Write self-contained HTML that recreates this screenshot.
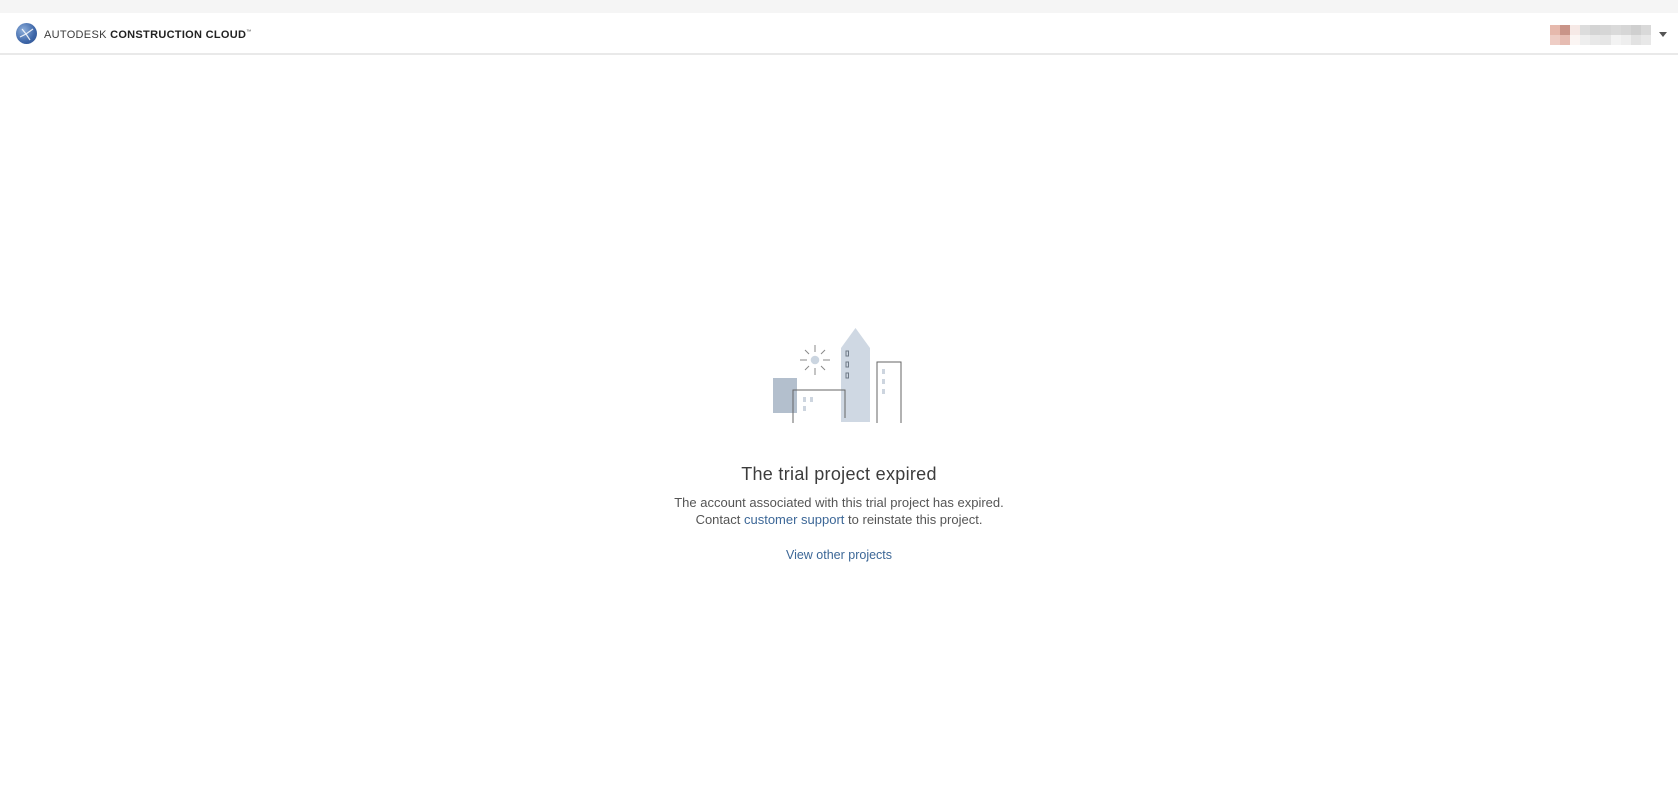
<!DOCTYPE html>
<html><head><meta charset="utf-8"><style>
*{margin:0;padding:0;box-sizing:border-box}
html,body{width:1678px;height:806px;overflow:hidden;background:#fff;font-family:"Liberation Sans",sans-serif}
.top{height:13px;background:#f5f5f5}
.hdr{height:42px;background:#fff;border-bottom:2px solid #e9e9e9;position:relative}
.logo{position:absolute;left:16px;top:10px;width:21px;height:21px;border-radius:50%;background:radial-gradient(circle at 35% 35%,#8fb0dc,#3d66a8 60%,#2c4f8c)}
.brand{position:absolute;left:44px;top:16px;font-size:11px;letter-spacing:0.3px;color:#3c3c3c;white-space:nowrap}
.brand b{color:#222;font-weight:bold}
.brand sup{font-size:5px;vertical-align:top}
.av{position:absolute;left:1550px;top:12px;display:flex;flex-wrap:wrap;width:101px;height:20px}
.av i{display:block;width:10.1px;height:10px}
.caret{position:absolute;left:1659px;top:19px;width:0;height:0;border-left:4px solid transparent;border-right:4px solid transparent;border-top:5px solid #555}
.ill{position:absolute;left:740px;top:310px}
.t{position:absolute;left:0;width:1678px;text-align:center;color:#3c3c3c}
h1{font-weight:normal;font-size:18px;top:464px;letter-spacing:0.3px}
.p{font-size:13px;color:#555;line-height:17px;top:494px}
a{color:#3c6797;text-decoration:none}
.l{font-size:12.5px;top:548px}
</style></head><body>
<div class="top"></div>
<div class="hdr">
<div class="logo"><svg width="21" height="21" viewBox="0 0 21 21"><path d="M4 14 L10 11 L17 6 M10 11 L14 17 M6 6 L10 11" stroke="#fff" stroke-width="1.2" fill="none" opacity=".85"/></svg></div>
<div class="brand">AUTODESK <b>CONSTRUCTION CLOUD</b><sup>™</sup></div>
<div class="av">
<i style="background:#e6b9ad"></i><i style="background:#c99488"></i><i style="background:#f6e9e6"></i><i style="background:#dcdcdc"></i><i style="background:#d4d4d4"></i><i style="background:#d6d6d6"></i><i style="background:#dadada"></i><i style="background:#d6d6d6"></i><i style="background:#cfcfcf"></i><i style="background:#d9d9d9"></i>
<i style="background:#eecdc5"></i><i style="background:#e6bcb2"></i><i style="background:#fbf5f3"></i><i style="background:#eeeeee"></i><i style="background:#e8e8e8"></i><i style="background:#e6e6e6"></i><i style="background:#f3f3f3"></i><i style="background:#eeeeee"></i><i style="background:#e2e2e2"></i><i style="background:#e8e8e8"></i>
</div>
<div class="caret"></div>
</div>
<svg class="ill" width="200" height="130" viewBox="0 0 200 130">
<rect x="33" y="68" width="24" height="35" fill="#b3bfcd"/>
<path d="M101 38 L101 112 L130 112 L130 38 L115.5 18 Z" fill="#cfd8e3"/>
<rect x="106" y="41" width="2.5" height="5" fill="none" stroke="#6d7886" stroke-width="1"/>
<rect x="106" y="52" width="2.5" height="5" fill="none" stroke="#6d7886" stroke-width="1"/>
<rect x="106" y="63" width="2.5" height="5" fill="none" stroke="#6d7886" stroke-width="1"/>
<path d="M53 113 V80 H105 V108" fill="none" stroke="#666" stroke-width="1"/>
<rect x="63" y="87" width="3" height="5" fill="#cdd5df"/><rect x="70" y="87" width="3" height="5" fill="#cdd5df"/><rect x="63" y="96" width="3" height="5" fill="#cdd5df"/>
<path d="M137 113 V52 H161 V113" fill="none" stroke="#666" stroke-width="1"/>
<rect x="142" y="59" width="3" height="5" fill="#cdd5df"/><rect x="142" y="69" width="3" height="5" fill="#cdd5df"/><rect x="142" y="79" width="3" height="5" fill="#cdd5df"/>
<circle cx="75" cy="50" r="4.3" fill="#cbd5e0"/>
<g stroke="#888" stroke-width="1">
<line x1="75" y1="35" x2="75" y2="42"/><line x1="75" y1="58" x2="75" y2="65"/>
<line x1="60" y1="50" x2="67" y2="50"/><line x1="83" y1="50" x2="90" y2="50"/>
<line x1="65" y1="40" x2="69" y2="44"/><line x1="81" y1="56" x2="85" y2="60"/>
<line x1="85" y1="40" x2="81" y2="44"/><line x1="69" y1="56" x2="65" y2="60"/>
</g>
</svg>
<h1 class="t">The trial project expired</h1>
<div class="t p">The account associated with this trial project has expired.<br>Contact <a>customer support</a> to reinstate this project.</div>
<div class="t l"><a>View other projects</a></div>
</body></html>
